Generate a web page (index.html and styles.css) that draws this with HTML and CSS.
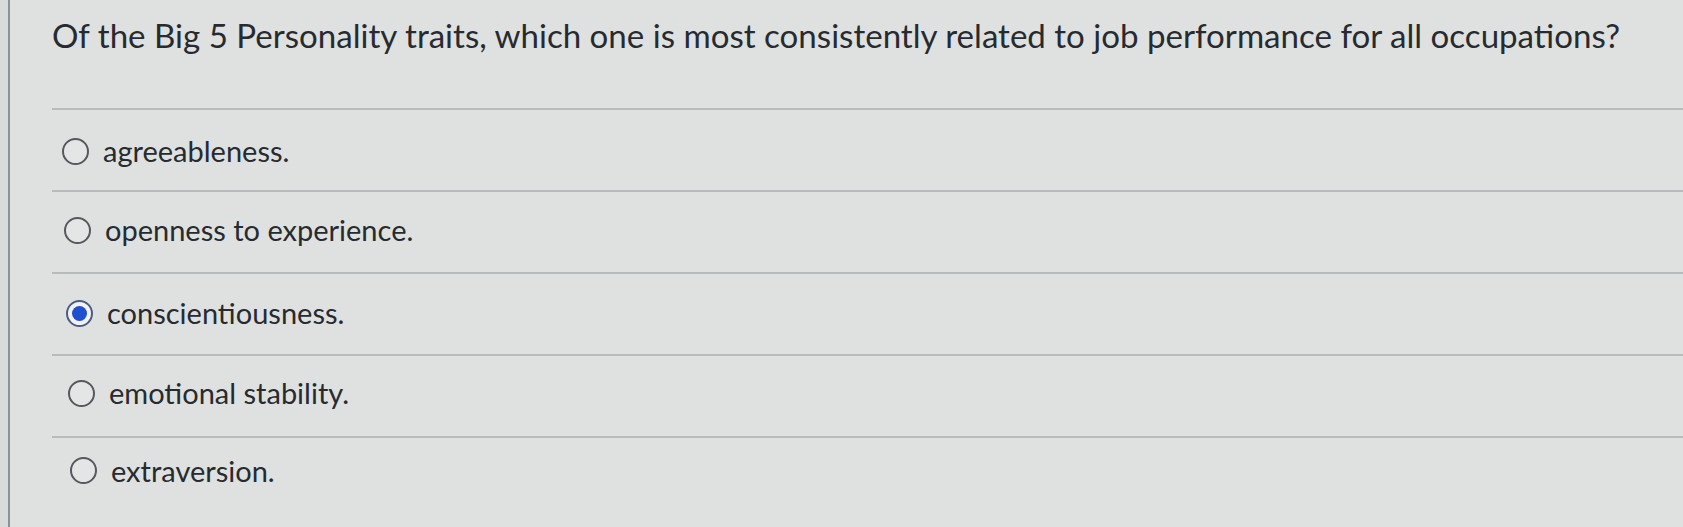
FILE: index.html
```html
<!DOCTYPE html>
<html lang="en">
<head>
<meta charset="utf-8">
<title>Quiz question</title>
<link rel="stylesheet" href="styles.css">
</head>
<body>
<div class="page">
  <div class="panel">
    <h1 class="question">Of the Big 5 Personality traits, which one is most consistently related to job performance for all occupations?</h1>
    <ul class="options">
      <li class="option"><span class="radio"></span><span class="label">agreeableness.</span></li>
      <li class="option"><span class="radio"></span><span class="label">openness to experience.</span></li>
      <li class="option"><span class="radio selected"></span><span class="label">conscientiousness.</span></li>
      <li class="option"><span class="radio"></span><span class="label">emotional stability.</span></li>
      <li class="option"><span class="radio"></span><span class="label">extraversion.</span></li>
    </ul>
  </div>
</div>
</body>
</html>
```

FILE: styles.css
```css
html, body {
  margin: 0;
  padding: 0;
  height: 100%;
}
body {
  background: #d8dbda;
  font-family: Lato, "Open Sans", sans-serif;
  color: #272b30;
  overflow: hidden;
}
.page {
  height: 100%;
  padding-left: 8px;
}
.panel {
  height: 100%;
  border-left: 2px solid #8c9198;
  background: #dfe1e0;
  padding-left: 42px;
}
.question {
  margin: 0;
  padding: 15px 0 53px 0;
  font-size: 33.1px;
  line-height: 40px;
  font-weight: 400;
  white-space: nowrap;
}
.options {
  list-style: none;
  margin: 0;
  padding: 0;
}
.option {
  border-top: 2px solid #b8bbbc;
  height: 80px;
  box-sizing: content-box;
  display: flex;
  align-items: center;
  gap: 14px;
  font-size: 29px;
  padding-left: 10px;
}
.option:nth-child(1) { padding-top: 2px; padding-bottom: 0; height: 78px; }
.option:nth-child(2) { padding-left: 12px; padding-top: 0; padding-bottom: 4px; height: 76px; }
.option:nth-child(3) { padding-left: 14px; padding-top: 0; padding-bottom: 2px; height: 78px; }
.option:nth-child(4) { padding-left: 16px; padding-top: 0; padding-bottom: 6px; height: 74px; }
.option:nth-child(5) { padding-left: 18px; padding-top: 0; padding-bottom: 15px; height: 65px; }
.radio {
  width: 23px;
  height: 23px;
  border: 2px solid #55585c;
  border-radius: 50%;
  flex: none;
  position: relative;
  background: #e4e6e5;
}
.radio.selected {
  border-color: #4e5d7e;
  background: #f0f2f4;
}
.radio.selected::after {
  content: "";
  position: absolute;
  left: 4px;
  top: 4px;
  width: 15px;
  height: 15px;
  border-radius: 50%;
  background: #1d4fd0;
}
.label {
  line-height: 32px;
}
```
